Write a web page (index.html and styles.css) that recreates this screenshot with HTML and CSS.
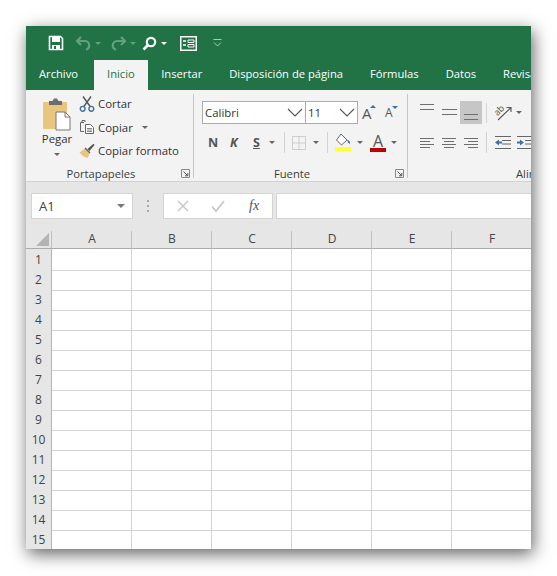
FILE: index.html
```html
<!DOCTYPE html>
<html lang="es">
<head>
<meta charset="utf-8">
<title>Excel</title>
<link rel="stylesheet" href="styles.css">
</head>
<body>
<main class="window">
  <header class="titlebar">
    <div class="qat">
      <svg class="q-save" width="16" height="16" viewBox="0 0 16 16"><path d="M1.5 1.5h11l2 2v11h-13z" fill="none" stroke="#fff" stroke-width="1.6"/><rect x="4" y="2" width="8" height="5" fill="#fff"/><rect x="4" y="10" width="8" height="4.5" fill="#fff"/><rect x="6" y="11" width="2" height="3" fill="#217346"/></svg>
      <svg class="q-undo" width="18" height="16" viewBox="0 0 18 16"><path d="M6 2 2 6l4 4M2.5 6H10a4.500 4.500 0 0 1 1 8.800" fill="none" stroke="#62a080" stroke-width="2.200"/></svg>
      <span class="caret dim q-c1"></span>
      <svg class="q-redo" width="18" height="16" viewBox="0 0 18 16"><path d="M12 2l4 4-4 4M15.500 6H8a4.500 4.500 0 0 0-1 8.800" fill="none" stroke="#62a080" stroke-width="2.200"/></svg>
      <span class="caret dim q-c2"></span>
      <svg class="q-find" width="15" height="15" viewBox="0 0 15 15"><circle cx="9" cy="6" r="4.200" fill="none" stroke="#fff" stroke-width="2.200"/><path d="M6 9 1.500 13.500" stroke="#fff" stroke-width="2.600"/></svg>
      <span class="caret white q-c3"></span>
      <svg class="q-form" width="17" height="15" viewBox="0 0 17 15"><rect x=".75" y=".75" width="15.500" height="13.500" fill="none" stroke="#fff" stroke-width="1.500"/><path d="M3 5h3M3 9h3" stroke="#fff" stroke-width="1.300"/><path d="M8 4h6v2.500H8zM8 8.500h6V11H8z" fill="none" stroke="#fff"/></svg>
      <svg class="q-more" width="9" height="8" viewBox="0 0 9 8"><path d="M.5.500h8" stroke="#a5cdb7"/><path d="M1 3.500 4.500 7 8 3.500" fill="none" stroke="#a5cdb7"/></svg>
    </div>
    <nav class="tabs">
      <span class="tab">Archivo</span>
      <span class="tab active">Inicio</span>
      <span class="tab">Insertar</span>
      <span class="tab">Disposición de página</span>
      <span class="tab">Fórmulas</span>
      <span class="tab">Datos</span>
      <span class="tab">Revisar</span>
    </nav>
  </header>

  <section class="ribbon">
    <div class="group clip">
      <div class="group-body clip-body">
        <div class="paste">
          <svg width="30" height="33" viewBox="0 0 30 33"><rect x="1" y="4" width="24" height="27" rx="1" fill="#eac57f"/><path d="M7 5V3h3.500l1.500-2.500h3L16.500 3H20v4H7z" fill="#6d6d6d"/><path d="M14 14h9l5 5v13H14z" fill="#fff" stroke="#777"/><path d="M23 14v5h5" fill="none" stroke="#777"/></svg>
          <span class="paste-label">Pegar</span>
          <span class="caret"></span>
        </div>
        <div class="clip-list">
          <div class="clip-item"><svg width="16" height="16" viewBox="0 0 16 16"><path d="M4 .5 11.500 11M12 .5 4.500 11" stroke="#555" stroke-width="1.400"/><circle cx="3.700" cy="12.800" r="2.400" fill="none" stroke="#41719c" stroke-width="1.400"/><circle cx="12.300" cy="12.800" r="2.400" fill="none" stroke="#41719c" stroke-width="1.400"/></svg><span>Cortar</span></div>
          <div class="clip-item"><svg width="16" height="16" viewBox="0 0 16 16"><path d="M5 3.500H1.500v9H5M3 3V1.500h3V3" fill="none" stroke="#666"/><path d="M6.500 5.500h5l3 3v6h-8z" fill="#fff" stroke="#666"/><path d="M8 9.500h5M8 11h5M8 12.500h5" stroke="#888"/></svg><span>Copiar</span><span class="caret copy-caret"></span></div>
          <div class="clip-item"><svg width="16" height="16" viewBox="0 0 16 16"><path d="M8.500 6 14.500.800l1 1.200L10.500 8z" fill="#555"/><path d="M6.500 5 11 9.500 8.500 15C6 14.500 2.500 12.500.500 9.500z" fill="#eac57f"/><path d="M6.500 4.500l5 5-1 1-5-5z" fill="#666"/></svg><span>Copiar formato</span></div>
        </div>
      </div>
      <div class="group-label">Portapapeles<svg class="launcher" width="9" height="9" viewBox="0 0 9 9"><path d="M.5 8V.500H8.500V8.500H.5" fill="none" stroke="#888"/><path d="M2.500 2.500 6.500 6.500M6.800 4v2.800H4" fill="none" stroke="#555"/></svg></div>
    </div>

    <div class="group font">
      <div class="group-body font-body">
        <div class="font-row">
          <div class="select font-name"><span>Calibri</span><svg width="16" height="9" viewBox="0 0 16 9"><path d="M1 1l7 7 7-7" fill="none" stroke="#555" stroke-width="1.100"/></svg></div>
          <div class="select font-size"><span>11</span><svg width="16" height="9" viewBox="0 0 16 9"><path d="M1 1l7 7 7-7" fill="none" stroke="#555" stroke-width="1.100"/></svg></div>
          <span class="grow">A<i class="tri up"></i></span>
          <span class="shrink">A<i class="tri down"></i></span>
        </div>
        <div class="format-row">
          <b class="fmt bold">N</b>
          <b class="fmt ital">K</b>
          <b class="fmt under">S</b>
          <span class="caret c-under"></span>
          <span class="vsep s1"></span>
          <svg class="i-border" width="14" height="14" viewBox="0 0 14 14"><path d="M.5.500h13v13H.5zM7 .500v13M.5 7h13" fill="none" stroke="#aaa" stroke-dasharray="1 1"/></svg>
          <span class="caret c-border"></span>
          <span class="vsep s2"></span>
          <svg class="i-fill" width="17" height="19" viewBox="0 0 17 19"><path d="M6 1 1.500 7 6.500 12 12 7z" fill="#fff" stroke="#666"/><path d="M12 6.500c2.500 1 3.500 3 3 4.500l-2-1.500z" fill="#41719c"/><rect y="14" width="16" height="4" fill="#ffff33"/></svg>
          <span class="caret c-fill"></span>
          <span class="color-a">A</span>
          <span class="caret c-color"></span>
        </div>
      </div>
      <div class="group-label">Fuente<svg class="launcher" width="9" height="9" viewBox="0 0 9 9"><path d="M.5 8V.500H8.500V8.500H.5" fill="none" stroke="#888"/><path d="M2.500 2.500 6.500 6.500M6.800 4v2.800H4" fill="none" stroke="#555"/></svg></div>
    </div>

    <div class="group align">
      <div class="group-body align-body">
        <div class="align-row top">
          <span class="lines v-top"><i></i><i></i></span>
          <span class="lines v-mid"><i></i><i></i></span>
          <span class="v-sel"><span class="lines"><i></i><i></i></span></span>
          <span class="vsep s3"></span>
          <svg class="i-orient" width="17" height="17" viewBox="0 0 17 17"><path d="M3 16 15.500 4M11.500 3.500h4.500V8" fill="none" stroke="#555" stroke-width="1.100"/><text x="0" y="10" font-size="9" transform="rotate(-45 4 8)" fill="#555" font-family="Open Sans">ab</text></svg>
          <span class="caret c-orient"></span>
        </div>
        <div class="align-row">
          <span class="lines h h-left"><i></i><i></i><i></i><i></i></span>
          <span class="lines h h-center"><i></i><i></i><i></i><i></i></span>
          <span class="lines h h-right"><i></i><i></i><i></i><i></i></span>
          <span class="vsep s4"></span>
          <svg class="i-indent" width="17" height="14" viewBox="0 0 17 14"><path d="M0 .500h16M7 4.500h9M7 8h9M0 12.500h16" stroke="#666"/><path d="M0 6.500 4 3.500v2h3v2H4v2z" fill="#41719c"/></svg>
          <svg class="i-indent2" width="17" height="14" viewBox="0 0 17 14"><path d="M0 .500h16M8 4.500h8M8 8h8M0 12.500h16" stroke="#666"/><path d="M7 6.500 3 3.500v2H0v2h3v2z" fill="#41719c"/></svg>
        </div>
      </div>
      <div class="group-label align-label">Alineación</div>
    </div>
  </section>

  <section class="formula">
    <div class="namebox"><span>A1</span><i class="namecaret"></i></div>
    <span class="dots"></span>
    <div class="fxbox">
      <svg width="14" height="14" viewBox="0 0 14 14"><path d="M2 2l10 10M12 2 2 12" stroke="#c8c8c8" stroke-width="1.500"/></svg>
      <svg width="14" height="14" viewBox="0 0 14 14"><path d="M1 7.500 5 12l8-10" fill="none" stroke="#c8c8c8" stroke-width="1.800"/></svg>
      <em>fx</em>
    </div>
    <div class="fbox"></div>
  </section>

  <section class="sheet">
    <div class="sheet-row head"><span class="corner"><i></i></span><span>A</span><span>B</span><span>C</span><span>D</span><span>E</span><span>F</span></div>
    <div class="sheet-row"><span>1</span><i></i><i></i><i></i><i></i><i></i><i></i></div>
    <div class="sheet-row"><span>2</span><i></i><i></i><i></i><i></i><i></i><i></i></div>
    <div class="sheet-row"><span>3</span><i></i><i></i><i></i><i></i><i></i><i></i></div>
    <div class="sheet-row"><span>4</span><i></i><i></i><i></i><i></i><i></i><i></i></div>
    <div class="sheet-row"><span>5</span><i></i><i></i><i></i><i></i><i></i><i></i></div>
    <div class="sheet-row"><span>6</span><i></i><i></i><i></i><i></i><i></i><i></i></div>
    <div class="sheet-row"><span>7</span><i></i><i></i><i></i><i></i><i></i><i></i></div>
    <div class="sheet-row"><span>8</span><i></i><i></i><i></i><i></i><i></i><i></i></div>
    <div class="sheet-row"><span>9</span><i></i><i></i><i></i><i></i><i></i><i></i></div>
    <div class="sheet-row"><span>10</span><i></i><i></i><i></i><i></i><i></i><i></i></div>
    <div class="sheet-row"><span>11</span><i></i><i></i><i></i><i></i><i></i><i></i></div>
    <div class="sheet-row"><span>12</span><i></i><i></i><i></i><i></i><i></i><i></i></div>
    <div class="sheet-row"><span>13</span><i></i><i></i><i></i><i></i><i></i><i></i></div>
    <div class="sheet-row"><span>14</span><i></i><i></i><i></i><i></i><i></i><i></i></div>
    <div class="sheet-row"><span>15</span><i></i><i></i><i></i><i></i><i></i><i></i></div>
  </section>
</main>
</body>
</html>
```
FILE: styles.css
```css
* { box-sizing: border-box; }
html, body { margin: 0; height: 100%; background: #fff; overflow: hidden; }
body { padding: 26px 0 0 26px; font-family: "Open Sans", "Noto Sans", sans-serif; font-size: 11.400px; color: #333; }
.window { width: 505px; height: 523px; overflow: hidden; background: #fff; box-shadow: 2px 5px 16px rgba(0,0,0,.62); display: flex; flex-direction: column; }
svg { display: block; flex: none; }

.titlebar { background: #217346; height: 64px; flex: none; }
.qat { height: 34px; display: flex; align-items: center; padding-left: 22px; }
.q-undo { margin-left: 11px; }
.q-c1 { margin-left: 2px; }
.q-redo { margin-left: 8px; }
.q-c2 { margin-left: 3px; }
.q-find { margin-left: 6px; }
.q-c3 { margin-left: 4px; }
.q-form { margin-left: 13px; }
.q-more { margin-left: 16px; }
.tabs { height: 30px; display: flex; white-space: nowrap; }
.tab { padding: 0 13.500px; line-height: 28px; color: #fff; font-size: 11.200px; }
.tab:first-child { padding: 0 16px 0 13px; }
.tab.active { background: #f3f3f3; color: #217346; padding: 0 13px; }

.caret { display: inline-block; width: 0; height: 0; border: 3px solid transparent; border-top: 3px solid #666; border-bottom: 0; flex: none; }
.caret.dim { border-top-color: #62a080; }
.caret.white { border-top-color: #fff; }

.ribbon { height: 92px; flex: none; background: #f3f3f3; border-bottom: 1px solid #d2d2d2; display: flex; padding-top: 4px; }
.group { display: flex; flex-direction: column; height: 84px; border-right: 1px solid #c6c6c6; flex: none; }
.group-body { height: 74px; flex: none; }
.group-label { height: 12px; line-height: 12px; text-align: center; font-size: 11.200px; position: relative; color: #3c3c3c; padding-right: 17px; }
.launcher { position: absolute; right: 3px; top: 1px; }

.clip { width: 168px; }
.clip-body { display: flex; padding: 4px 0 0 15px; }
.paste { width: 32px; display: flex; flex-direction: column; align-items: center; }
.paste-label { line-height: 16px; }
.paste .caret { margin-top: 6px; }
.clip-list { margin-left: 6px; display: flex; flex-direction: column; gap: 6.500px; margin-top: -3px; }
.clip-item { display: flex; align-items: center; height: 17px; gap: 3px; white-space: nowrap; }
.copy-caret { margin-left: 6px; }

.font { width: 214px; }
.font-body { padding: 7px 0 0 8px; }
.font-row { display: flex; align-items: center; }
.select { height: 23px; background: #fff; border: 1px solid #ababab; display: flex; align-items: center; justify-content: space-between; padding: 0 2px; }
.font-name { width: 104px; }
.font-size { width: 53px; margin-left: -1px; }
.grow { font-size: 15px; margin-left: 4px; position: relative; width: 20px; color: #555; }
.shrink { font-size: 12px; margin-left: 3px; position: relative; color: #555; }
.tri { position: absolute; top: 2px; right: 6px; border: 3px solid transparent; border-bottom: 3px solid #41719c; border-top: 0; }
.shrink .tri { right: -5px; border-bottom: 0; border-top: 3px solid #41719c; }
.format-row { display: flex; align-items: center; height: 21px; margin-top: 8px; }
.fmt { font-size: 12.500px; color: #555; line-height: 20px; }
.bold { margin-left: 6px; width: 22px; }
.ital { font-style: italic; width: 23px; }
.under { text-decoration: underline; width: 16px; }
.vsep { width: 1px; height: 21px; background: #d2d2d2; flex: none; display: block; }
.s1 { margin-left: 9px; }
.i-border { margin-left: 7px; }
.c-border { margin-left: 7px; }
.s2 { margin-left: 8px; }
.i-fill { margin-left: 7px; }
.c-fill { margin-left: 5px; }
.color-a { margin-left: 7px; width: 16px; text-align: center; font-size: 16px; line-height: 14px; height: 18px; color: #555; border-bottom: 4px solid #c00000; }
.c-color { margin-left: 5px; }

.align { width: 200px; }
.align-body { padding: 7px 0 0 12px; }
.align-row { display: flex; align-items: center; height: 23px; }
.align-row + .align-row { height: 21px; margin-top: 8px; }
.lines { display: flex; flex-direction: column; gap: 4px; width: 14px; flex: none; }
.lines i { display: block; height: 1px; width: 100%; background: #6e6e6e; }
.v-top { margin-top: -11px; }
.v-mid { margin-left: 8px; margin-top: -1px; width: 15px; }
.v-sel { width: 22px; height: 23px; margin-left: 3px; background: #c6c6c6; display: flex; align-items: flex-end; justify-content: center; padding-bottom: 4px; }
.s3 { margin-left: 4px; height: 20px; }
.i-orient { margin-left: 8px; }
.c-orient { margin-left: 4px; }
.h { gap: 2px; }
.h-center { margin-left: 8px; align-items: center; }
.h-right { margin-left: 8px; align-items: flex-end; }
.h-left i:nth-child(even), .h-center i:nth-child(even), .h-right i:nth-child(even) { width: 10px; }
.s4 { margin-left: 8px; }
.i-indent { margin-left: 8px; }
.i-indent2 { margin-left: 5px; }
.align-label { text-align: left; padding: 0 0 0 108px; white-space: nowrap; }

.formula { height: 49px; flex: none; background: #e6e6e6; display: flex; padding: 11px 0 0 5px; align-items: flex-start; }
.namebox { width: 102px; height: 26px; flex: none; background: #fff; border: 1px solid #d4d4d4; display: flex; align-items: center; justify-content: space-between; padding: 0 7px; font-size: 13px; color: #444; }
.namecaret { border: 4px solid transparent; border-top: 4px solid #777; border-bottom: 0; }
.dots { width: 2px; height: 12px; margin: 7px 14px 0 14px; background: repeating-linear-gradient(#aaa 0 2px, transparent 2px 5px); flex: none; }
.fxbox { width: 110px; height: 26px; flex: none; background: #fff; border: 1px solid #d4d4d4; display: flex; align-items: center; padding-left: 12px; gap: 21px; }
.fxbox em { font-family: "Liberation Serif", serif; font-size: 14px; color: #555; margin-left: 3px; }
.fbox { width: 260px; height: 26px; margin-left: 3px; background: #fff; border: 1px solid #d4d4d4; flex: none; }

.sheet { flex: 1; display: flex; flex-direction: column; background: #fff; }
.sheet-row { display: grid; grid-template-columns: 26px repeat(6, 80px); height: 20px; flex: none; }
.sheet-row > span { background: #e6e6e6; border-right: 1px solid #b5b5b5; border-bottom: 1px solid #cfcfcf; text-align: center; line-height: 21px; color: #444; font-size: 12px; }
.sheet-row > i { border-right: 1px solid #d4d4d4; border-bottom: 1px solid #d4d4d4; }
.head { height: 18px; }
.head > span { line-height: 16px; padding-left: 1px; border-right-color: #c0c0c0; border-bottom: 1px solid #ababab; }
.corner { display: flex; align-items: flex-end; justify-content: flex-end; padding: 0 2px 2px 0; }
.corner i { width: 0; height: 0; border-style: solid; border-width: 0 0 13px 13px; border-color: transparent transparent #b4b4b4 transparent; }
```
